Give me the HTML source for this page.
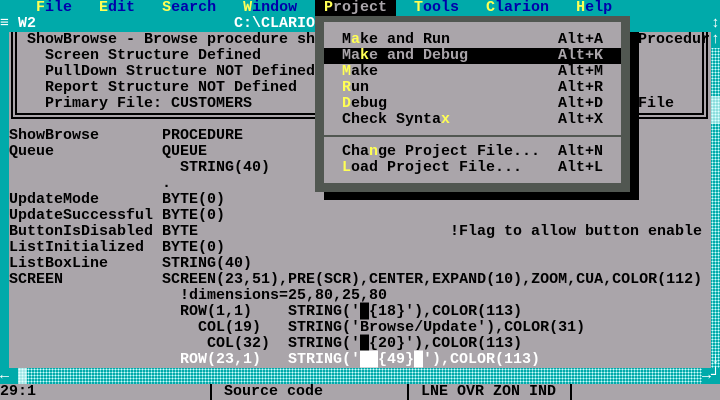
<!DOCTYPE html>
<html><head><style>
*{margin:0;padding:0}
body{width:720px;height:400px;background:#aaa5aa;position:relative;overflow:hidden;font-family:"Liberation Mono",monospace;font-size:15px;line-height:16px;font-weight:bold;}
.a{position:absolute;white-space:pre;}
.r{position:absolute;}
.y{color:#ffff55}
.dots{background-color:#00aaaa;background-image:radial-gradient(#cfffff 0.8px,transparent 1px);background-size:3px 3px;}
</style></head><body>
<!-- menu bar -->
<div class="r" style="left:0;top:0;width:720px;height:16px;background:#00aaaa"></div>
<div class="r" style="left:315px;top:0;width:81px;height:16px;background:#000"></div>
<div class="a" style="left:36px;top:0;color:#0000aa"><span class="y">F</span>ile   <span class="y">E</span>dit   <span class="y">S</span>earch   <span class="y">W</span>indow</div>
<div class="a" style="left:324px;top:0;color:#aaa5aa"><span class="y">P</span>roject</div>
<div class="a" style="left:414px;top:0;color:#0000aa"><span class="y">T</span>ools   <span class="y">C</span>larion   <span class="y">H</span>elp</div>
<!-- title bar -->
<div class="r" style="left:0;top:16px;width:720px;height:16px;background:#00aaaa"></div>
<div class="a" style="left:0;top:16px;color:#fff">≡ W2</div>
<div class="a" style="left:234px;top:16px;color:#fff">C:\CLARIO</div>
<div class="a" style="left:711px;top:16px;color:#fff">↕</div>
<!-- left border -->
<div class="r" style="left:0;top:32px;width:9px;height:352px;background:#00aaaa"></div>
<!-- right scrollbar -->
<div class="r dots" style="left:711px;top:32px;width:9px;height:336px"></div>
<div class="r" style="left:711px;top:32px;width:9px;height:16px;background:#00aaaa"></div>
<div class="a" style="left:711px;top:32px;color:#fff">↑</div>
<div class="r" style="left:711px;top:96px;width:9px;height:28px;background:#e8ffff;opacity:.6"></div>
<div class="a" style="left:711px;top:352px;color:#fff">↓</div>
<!-- header box -->
<div class="r" style="left:11px;top:32px;width:2px;height:87px;background:#000"></div>
<div class="r" style="left:15px;top:32px;width:2px;height:83px;background:#000"></div>
<div class="r" style="left:11px;top:117px;width:697px;height:2px;background:#000"></div>
<div class="r" style="left:15px;top:113px;width:689px;height:2px;background:#000"></div>
<div class="r" style="left:706px;top:32px;width:2px;height:87px;background:#000"></div>
<div class="r" style="left:702px;top:32px;width:2px;height:83px;background:#000"></div>
<div class="a" style="left:27px;top:32px">ShowBrowse - Browse procedure sh</div>
<div class="a" style="left:638px;top:32px">Procedur</div>
<div class="a" style="left:45px;top:48px">Screen Structure Defined
PullDown Structure NOT Defined
Report Structure NOT Defined
Primary File: CUSTOMERS</div>
<div class="a" style="left:638px;top:96px">File</div>
<!-- code -->
<div class="a" style="left:9px;top:128px">ShowBrowse       PROCEDURE
Queue            QUEUE
                   STRING(40)
                 .
UpdateMode       BYTE(0)
UpdateSuccessful BYTE(0)
ButtonIsDisabled BYTE
ListInitialized  BYTE(0)
ListBoxLine      STRING(40)
SCREEN           SCREEN(23,51),PRE(SCR),CENTER,EXPAND(10),ZOOM,CUA,COLOR(112)
                   !dimensions=25,80,25,80
                   ROW(1,1)    STRING('█{18}'),COLOR(113)
                     COL(19)   STRING('Browse/Update'),COLOR(31)
                      COL(32)  STRING('█{20}'),COLOR(113)</div>
<div class="a" style="left:450px;top:224px">!Flag to allow button enable</div>
<div class="a" style="left:180px;top:352px;color:#fff">ROW(23,1)   STRING('██{49}█'),COLOR(113)</div>
<!-- horizontal scrollbar -->
<div class="r dots" style="left:0;top:368px;width:720px;height:16px"></div>
<div class="r" style="left:0;top:368px;width:18px;height:16px;background:#00aaaa"></div>
<div class="r" style="left:18px;top:368px;width:9px;height:16px;background:#e8ffff;opacity:.7"></div>
<div class="r" style="left:702px;top:368px;width:18px;height:16px;background:#00aaaa"></div>
<div class="a" style="left:0;top:368px;color:#fff">←</div>
<div class="a" style="left:702px;top:368px;color:#fff">→┘</div>
<!-- status -->
<div class="a" style="left:0;top:384px">29:1</div>
<div class="r" style="left:210px;top:384px;width:2px;height:16px;background:#000"></div>
<div class="a" style="left:224px;top:384px">Source code</div>
<div class="r" style="left:407px;top:384px;width:2px;height:16px;background:#000"></div>
<div class="a" style="left:421px;top:384px">LNE OVR ZON IND</div>
<div class="r" style="left:570px;top:384px;width:2px;height:16px;background:#000"></div>
<!-- dropdown -->
<div class="r" style="left:324px;top:32px;width:315px;height:168px;background:#000"></div>
<div class="r" style="left:315px;top:16px;width:315px;height:176px;background:#515751"></div>
<div class="r" style="left:324px;top:22px;width:297px;height:161px;background:#aaa5aa"></div>
<div class="r" style="left:324px;top:48px;width:297px;height:16px;background:#000"></div>
<div class="r" style="left:324px;top:135px;width:297px;height:2px;background:#515751"></div>
<div class="a" style="left:342px;top:32px">M<span class="y">a</span>ke and Run</div>
<div class="a" style="left:342px;top:48px;color:#aaa5aa">Ma<span class="y">k</span>e and Debug</div>
<div class="a" style="left:342px;top:64px"><span class="y">M</span>ake
<span class="y">R</span>un
<span class="y">D</span>ebug
Check Synta<span class="y">x</span></div>
<div class="a" style="left:558px;top:32px">Alt+A</div>
<div class="a" style="left:558px;top:48px;color:#aaa5aa">Alt+K</div>
<div class="a" style="left:558px;top:64px">Alt+M
Alt+R
Alt+D
Alt+X</div>
<div class="a" style="left:342px;top:144px">Cha<span class="y">n</span>ge Project File...
<span class="y">L</span>oad Project File...</div>
<div class="a" style="left:558px;top:144px">Alt+N
Alt+L</div>
</body></html>
